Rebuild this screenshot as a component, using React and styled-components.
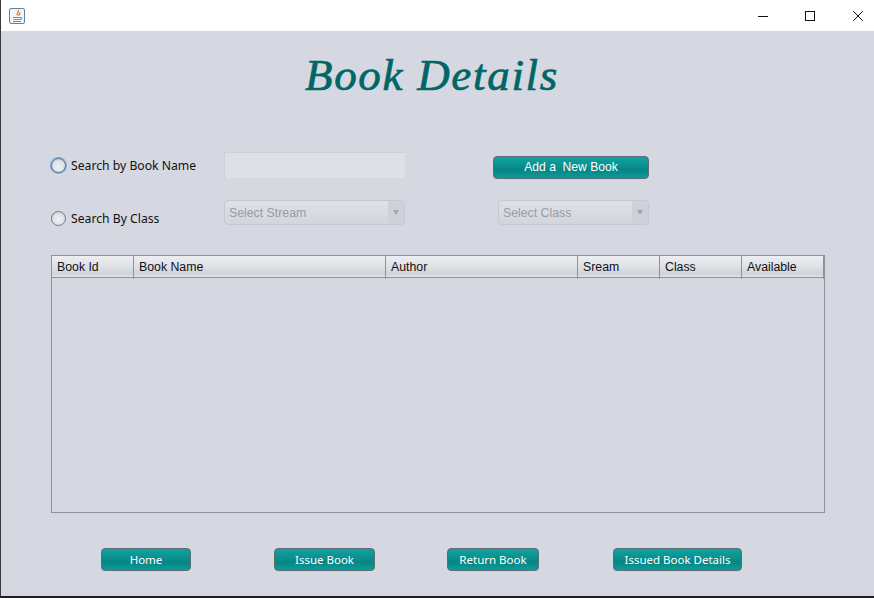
import React from "react";
import styled, { createGlobalStyle } from "styled-components";

const Global = createGlobalStyle`
  html, body { margin: 0; padding: 0; background: #d5d8e0; }
  * { box-sizing: border-box; }
`;

const Win = styled.div`
  width: 874px;
  height: 598px;
  display: flex;
  flex-direction: column;
  background: #d5d8e0;
  border-left: 1px solid #3a3a3a;
  border-bottom: 2px solid #1e1e1e;
  overflow: hidden;
  font-family: "Noto Sans", "Open Sans", sans-serif;
`;

const TitleBar = styled.header`
  height: 31px;
  flex: none;
  margin-left: -1px;
  background: #fff;
  display: flex;
  align-items: center;
  padding-left: 9px;
`;

const Controls = styled.div`
  margin-left: auto;
  padding-right: 11px;
  display: flex;
  align-items: center;
  gap: 38px;
`;

const Title = styled.h1`
  margin: 16px 0 0;
  height: 56px;
  padding-right: 11px;
  text-align: center;
  font-family: "Liberation Serif", serif;
  font-style: italic;
  font-weight: 400;
  font-size: 45px;
  letter-spacing: 1.7px;
  line-height: 56px;
  color: #006666;
  -webkit-text-stroke: 0.7px #006666;
`;

const SearchGrid = styled.section`
  margin-top: 49px;
  padding-left: 49px;
  display: grid;
  grid-template-columns: 174px 269px 156px;
  grid-template-rows: 26px 25px;
  row-gap: 22px;
  align-items: center;
`;

const RadioLabel = styled.label`
  display: flex;
  align-items: center;
  gap: 5px;
  padding-left: 1px;
  font-size: 12.2px;
  color: #111;
  position: relative;
  top: ${p => p.$shift || 0}px;
`;

const Radio = styled.span`
  width: 15px;
  height: 15px;
  border-radius: 50%;
  flex: none;
  background: radial-gradient(circle at 50% 60%, #eef0f4 0%, #dfe2e9 55%, #c3c7d1 100%);
  border: 1px solid ${p => (p.$focus ? "#4f6f95" : "#6f7684")};
  box-shadow: ${p => (p.$focus ? "0 0 0 1px #7fa3cf" : "none")};
`;

const TextField = styled.div`
  width: 181px;
  height: 26px;
  background: #dde0e6;
  border-top: 1px solid #cdd0d8;
  border-left: 1px solid #cdd0d8;
`;

const Select = styled.div`
  width: ${p => p.$w}px;
  height: 25px;
  justify-self: ${p => p.$align};
  display: flex;
  border: 1px solid #c5c8d1;
  border-radius: 4px;
  overflow: hidden;
  background: linear-gradient(#dfe1e7, #d2d5dd);
  font-family: "Liberation Sans", sans-serif;
  font-size: 12.3px;
  color: #9a9ca3;
`;

const SelectText = styled.span`
  flex: 1;
  padding-left: 4px;
  line-height: 25px;
`;

const SelectArrow = styled.span`
  width: 16px;
  background: #cdd1da;
  display: flex;
  align-items: center;
  justify-content: center;
  &::after {
    content: "";
    border-left: 3.5px solid transparent;
    border-right: 3.5px solid transparent;
    border-top: 5px solid #a2a6b0;
  }
`;

const Btn = styled.button`
  height: 23px;
  width: ${p => p.$w}px;
  padding: 0;
  border: 1px solid #5d6b72;
  border-radius: 4px;
  background: linear-gradient(#10a3a0 0%, #0a8f8d 45%, #078583 60%, #0b9c99 100%);
  color: #fff;
  font-family: "Noto Sans", sans-serif;
  font-size: 11.5px;
  white-space: pre;
`;

const AddBtn = styled(Btn)`
  font-family: "Liberation Sans", sans-serif;
  font-size: 12.1px;
  position: relative;
  top: 2px;
`;

const Table = styled.section`
  margin: 30px 0 0 50px;
  width: 774px;
  height: 258px;
  border: 1px solid #8f929b;
`;

const HeadRow = styled.div`
  display: grid;
  grid-template-columns: 82px 252px 192px 82px 82px 82px;
  height: 22px;
  border-bottom: 1px solid #8f929b;
  background: linear-gradient(#eceef2 0%, #dfe1e7 50%, #d0d3da 85%, #e2e4ea 100%);
  margin-right: 1px;
`;

const HeadCell = styled.div`
  border-right: 1px solid #8f929b;
  padding-left: 5px;
  font-family: "Liberation Sans", sans-serif;
  font-size: 12.3px;
  line-height: 23px;
  color: #111;
`;

const Footer = styled.footer`
  margin-top: 35px;
  padding-left: 100px;
  display: grid;
  grid-template-columns: 173px 173px 166px auto;
  justify-items: start;
`;

const JavaIcon = () => (
  <svg width="16" height="16" viewBox="0 0 16 16" fill="none">
    <rect x="0.5" y="0.5" width="15" height="15" rx="1.5" fill="#f3f5f8" stroke="#5f82a3" />
    <path d="M9.5 2c1 1.8-2.4 3-1.2 5.5M11 4.5c.4 1.2-1.4 1.8-1 3.2" stroke="#e8822a" strokeWidth="1.4" />
    <path d="M4 9.5h7M4.5 11.5h6.5M4 13.5h8" stroke="#6d8fb0" />
    <path d="M11 9.5h1.5v1.5L11 11.5" stroke="#6d8fb0" />
  </svg>
);

const Minimize = () => (
  <svg width="10" height="10" viewBox="0 0 10 10" overflow="visible"><path d="M1 5.5h10" stroke="#111" /></svg>
);
const Maximize = () => (
  <svg width="10" height="10" viewBox="0 0 10 10"><rect x="0.5" y="0.5" width="9" height="9" fill="none" stroke="#111" /></svg>
);
const Close = () => (
  <svg width="10" height="10" viewBox="0 0 10 10"><path d="M.2.2l9.6 9.6M9.8.2L.2 9.8" stroke="#111" /></svg>
);

const columns = ["Book Id", "Book Name", "Author", "Sream", "Class", "Available"];

export default function App() {
  return (
    <Win>
      <Global />
      <TitleBar>
        <JavaIcon />
        <Controls>
          <Minimize />
          <Maximize />
          <Close />
        </Controls>
      </TitleBar>
      <Title>Book Details</Title>
      <SearchGrid>
        <RadioLabel><Radio $focus />Search by Book Name</RadioLabel>
        <TextField />
        <AddBtn $w={156}>Add a  New Book</AddBtn>
        <RadioLabel $shift={6}><Radio />Search By Class</RadioLabel>
        <Select $w={181} $align="start">
          <SelectText>Select Stream</SelectText>
          <SelectArrow />
        </Select>
        <Select $w={151} $align="end">
          <SelectText>Select Class</SelectText>
          <SelectArrow />
        </Select>
      </SearchGrid>
      <Table>
        <HeadRow>
          {columns.map(c => <HeadCell key={c}>{c}</HeadCell>)}
        </HeadRow>
      </Table>
      <Footer>
        <Btn $w={90}>Home</Btn>
        <Btn $w={101}>Issue Book</Btn>
        <Btn $w={92}>Return Book</Btn>
        <Btn $w={129}>Issued Book Details</Btn>
      </Footer>
    </Win>
  );
}
